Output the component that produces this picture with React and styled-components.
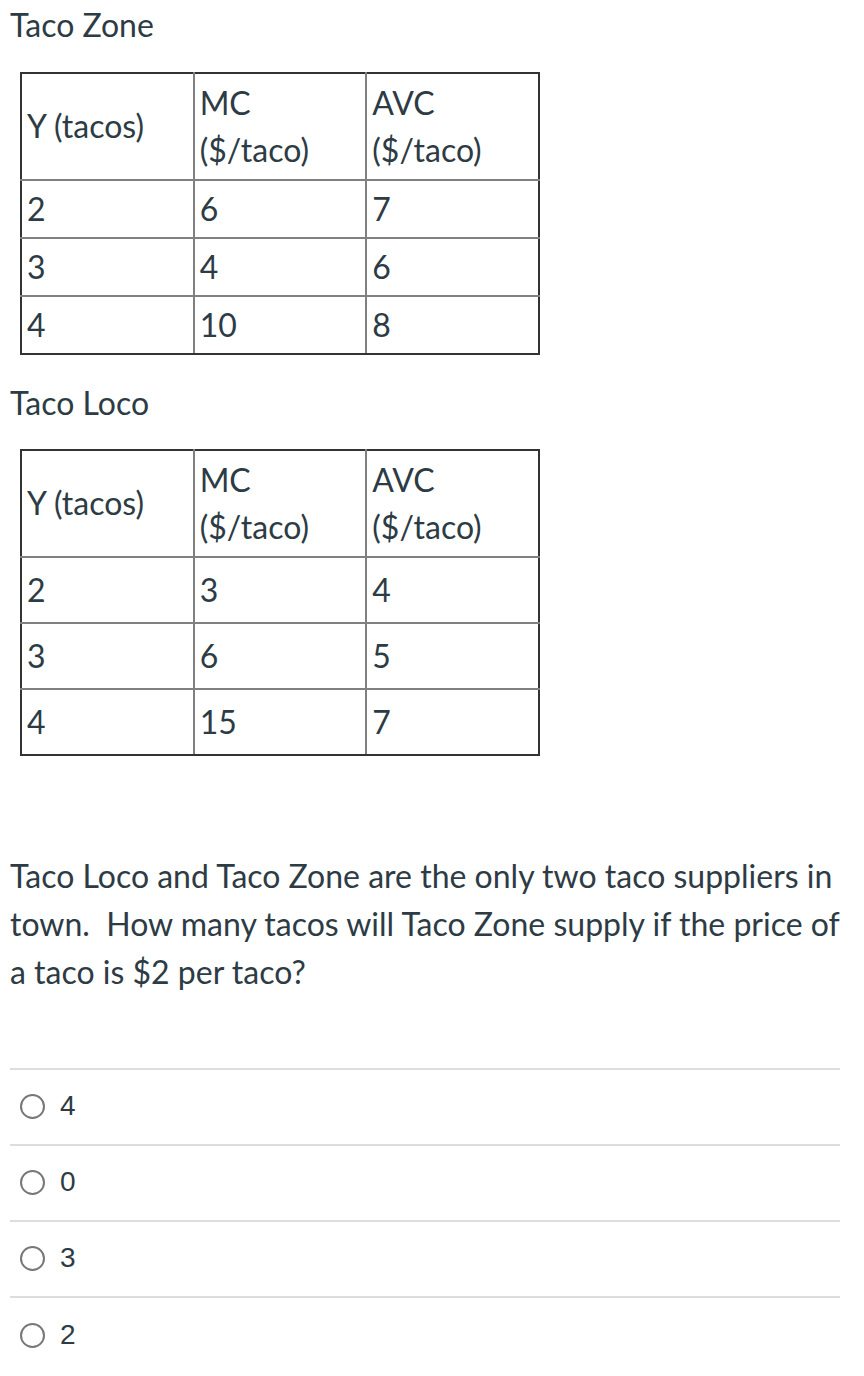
import React from "react";
import styled, { createGlobalStyle } from "styled-components";

const GlobalStyle = createGlobalStyle`
  html, body {
    margin: 0;
    padding: 0;
    background: #fff;
  }
  body {
    font-family: Lato, "Noto Sans", sans-serif;
    color: #2d3b45;
  }
`;

const Page = styled.div`
  width: 864px;
  padding: 4px 24px 0 10px;
  box-sizing: border-box;
`;

const Heading = styled.p`
  margin: 0;
  font-size: 32px;
  line-height: 42px;
`;

const Table = styled.table`
  border-collapse: collapse;
  width: 520px;
  margin: ${(p) => p.$top}px 0 ${(p) => p.$bottom}px 10px;
  font-size: 32px;
  table-layout: fixed;

  tr:first-child > td {
    border-top-color: #333;
  }
  tr:last-child > td {
    border-bottom-color: #333;
  }
  td:first-child {
    border-left-color: #333;
  }
  td:last-child {
    border-right-color: #333;
  }
`;

const Cell = styled.td`
  border: 2px solid #808080;
  padding: 0 0 2px 5px;
  height: ${(p) => p.$h}px;
  line-height: 47px;
  vertical-align: middle;
  text-align: left;
`;

const Question = styled.p`
  margin: 0 0 72px 0;
  font-size: 32px;
  line-height: 48px;
`;

const Answers = styled.div`
  width: 830px;
  border-top: 2px solid #ddd;
`;

const Answer = styled.label`
  display: flex;
  align-items: center;
  gap: 15px;
  height: 76px;
  padding: 0 0 2px 10px;
  box-sizing: border-box;
  border-bottom: ${(p) => (p.$last ? "none" : "2px solid #ddd")};
  font-family: "Liberation Sans", Arial, sans-serif;
  font-size: 28px;
`;

const Radio = styled.span`
  width: 21px;
  height: 21px;
  border: 2px solid #777;
  border-radius: 50%;
`;

const DataTable = ({ rows, headH, rowH, top, bottom }) => (
  <Table $top={top} $bottom={bottom}>
    <tbody>
      <tr>
        <Cell $h={headH}>Y (tacos)</Cell>
        <Cell $h={headH}>
          MC
          <br />
          ($/taco)
        </Cell>
        <Cell $h={headH}>
          AVC
          <br />
          ($/taco)
        </Cell>
      </tr>
      {rows.map((r) => (
        <tr key={r[0]}>
          {r.map((v, i) => (
            <Cell key={i} $h={rowH}>
              {v}
            </Cell>
          ))}
        </tr>
      ))}
    </tbody>
  </Table>
);

const zone = [
  [2, 6, 7],
  [3, 4, 6],
  [4, 10, 8],
];

const loco = [
  [2, 3, 4],
  [3, 6, 5],
  [4, 15, 7],
];

export default function App() {
  return (
    <Page>
      <GlobalStyle />
      <Heading>Taco Zone</Heading>
      <DataTable rows={zone} headH={103} rowH={54} top={26} bottom={27} />
      <Heading>Taco Loco</Heading>
      <DataTable rows={loco} headH={103} rowH={62} top={25} bottom={96} />
      <Question>
        Taco Loco and Taco Zone are the only two taco suppliers in town.&nbsp;
        How many tacos will Taco Zone supply if the price of a taco is $2 per
        taco?
      </Question>
      <Answers>
        {["4", "0", "3", "2"].map((a, i) => (
          <Answer key={a} $last={i === 3}>
            <Radio />
            {a}
          </Answer>
        ))}
      </Answers>
    </Page>
  );
}
